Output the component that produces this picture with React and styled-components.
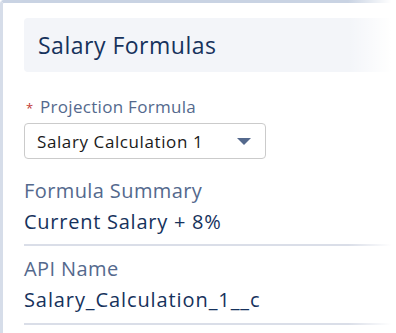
import React from 'react';
import styled, { createGlobalStyle } from 'styled-components';

const GlobalStyle = createGlobalStyle`
  html, body {
    margin: 0;
    padding: 0;
    background: #ffffff;
  }
  body {
    font-family: "Open Sans", "Liberation Sans", sans-serif;
    -webkit-font-smoothing: antialiased;
  }
`;

const Frame = styled.div`
  position: relative;
  width: 396px;
  height: 333px;
  overflow: hidden;
  background: #ffffff;
`;

const Card = styled.div`
  box-sizing: border-box;
  width: 420px;
  min-height: 340px;
  border-left: 3px solid #d6dde9;
  border-top: 3px solid #c9d3e3;
  border-top-left-radius: 4px;
  padding: 15px 0 0 21px;
  display: flex;
  flex-direction: column;
`;

const Header = styled.div`
  height: 54px;
  display: flex;
  align-items: center;
  padding-left: 14px;
  background: #f3f5f9;
  border-radius: 4px 0 0 4px;
  color: #16325c;
  font-size: 23px;
  letter-spacing: 0.5px;
`;

const Field = styled.div`
  display: flex;
  flex-direction: column;
  margin-top: ${p => p.$top}px;
`;

const FormLabel = styled.div`
  display: flex;
  align-items: baseline;
  color: #54698d;
  font-size: 17px;
  line-height: 22px;
  letter-spacing: 0.3px;
`;

const Required = styled.span`
  color: #c23934;
  font-size: 13px;
  width: 14px;
  margin-left: 2px;
`;

const Select = styled.div`
  box-sizing: border-box;
  width: 242px;
  height: 36px;
  margin-top: 4px;
  border: 1px solid #cbcbcb;
  border-radius: 4px;
  display: flex;
  align-items: center;
  justify-content: space-between;
  padding: 0 14px 0 12px;
  color: #1a1a1a;
  font-size: 17px;
  letter-spacing: 0.6px;
`;

const Label = styled.div`
  color: #54698d;
  font-size: 20px;
  line-height: 31px;
  letter-spacing: 0.4px;
`;

const Value = styled.div`
  color: #16325c;
  font-size: 20px;
  line-height: 31px;
  letter-spacing: ${p => p.$spacing ?? 0.75}px;
`;

const Divider = styled.div`
  height: 2px;
  background: #dadee8;
  margin-top: ${p => p.$top}px;
`;

const Fade = styled.div`
  position: absolute;
  top: 0;
  right: 0;
  width: 48px;
  height: 100%;
  background: linear-gradient(to right, rgba(255, 255, 255, 0), #ffffff 90%);
  pointer-events: none;
`;

const Caret = () => (
  <svg width="14" height="7" viewBox="0 0 14 7">
    <path d="M0 0 H14 L7 7 Z" fill="#54698d" />
  </svg>
);

export default function App() {
  return (
    <Frame>
      <GlobalStyle />
      <Card>
        <Header>Salary Formulas</Header>
        <Field $top={24}>
          <FormLabel>
            <Required>*</Required>
            Projection Formula
          </FormLabel>
          <Select>
            <span>Salary Calculation 1</span>
            <Caret />
          </Select>
        </Field>
        <Field $top={16}>
          <Label>Formula Summary</Label>
          <Value>Current Salary + 8%</Value>
        </Field>
        <Divider $top={7} />
        <Field $top={7}>
          <Label>API Name</Label>
          <Value $spacing={0.9}>Salary_Calculation_1__c</Value>
        </Field>
        <Divider $top={8} />
      </Card>
      <Fade />
    </Frame>
  );
}
